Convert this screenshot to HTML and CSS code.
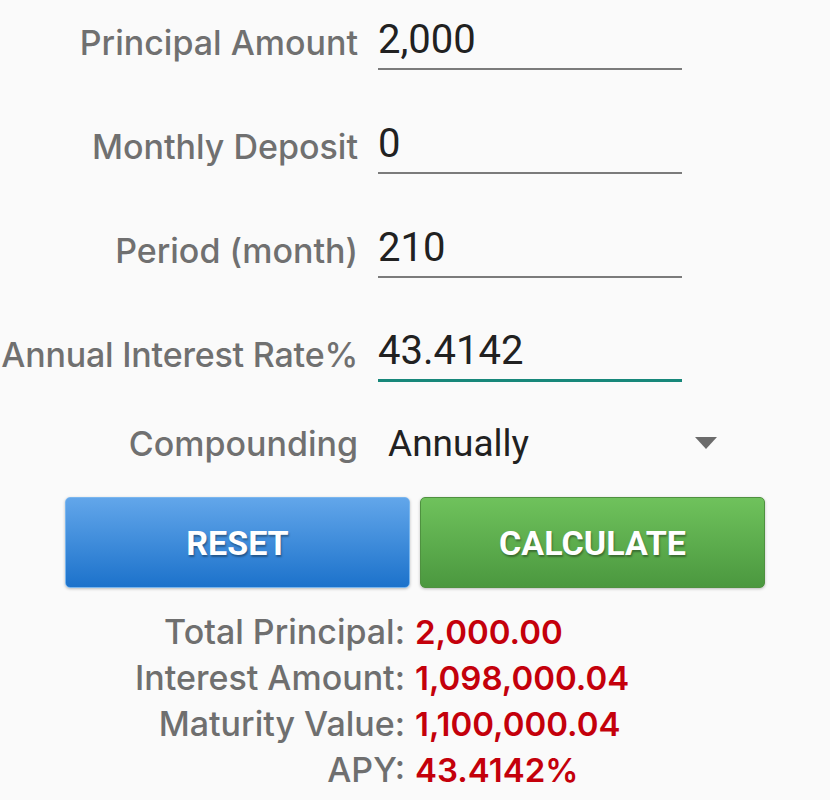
FILE: index.html
```html
<!DOCTYPE html>
<html lang="en">
  <head>
    <meta charset="UTF-8" />
    <meta name="viewport" content="width=device-width, initial-scale=1.0" />
    <title>Compound Interest Calculator</title>
    <link rel="stylesheet" href="styles.css">
  </head>
  <body>
    <div class="calculator">
      <form class="inputs" id="calcForm">
        <div class="row">
          <label for="principal">Principal Amount</label>
          <input type="text" class="field" id="principal" value="2,000" />
        </div>
        <div class="row">
          <label for="deposit">Monthly Deposit</label>
          <input type="text" class="field" id="deposit" value="0" />
        </div>
        <div class="row">
          <label for="period">Period (month)</label>
          <input type="text" class="field" id="period" value="210" />
        </div>
        <div class="row">
          <label for="rate" class="longLabel">Annual Interest Rate%</label>
          <input type="text" class="field focused" id="rate" value="43.4142" />
        </div>
        <div class="row spinnerRow">
          <label>Compounding</label>
          <div class="spinner">
            <span>Annually</span>
            <span class="arrow"></span>
          </div>
        </div>
      </form>

      <div class="actions">
        <button class="btn reset" type="button">RESET</button>
        <button class="btn calculate" type="button">CALCULATE</button>
      </div>

      <div class="results">
        <span class="resLabel">Total Principal:</span>
        <span class="resValue">2,000.00</span>
        <span class="resLabel">Interest Amount:</span>
        <span class="resValue">1,098,000.04</span>
        <span class="resLabel">Maturity Value:</span>
        <span class="resValue">1,100,000.04</span>
        <span class="resLabel">APY:</span>
        <span class="resValue">43.4142%</span>
      </div>
    </div>
  </body>
</html>
```

FILE: styles.css
```css
body {
  margin: 0;
  padding: 0;
  background-color: #fafafa;
  font-family: Inter, "Noto Sans", sans-serif;
}

.calculator {
  width: 830px;
}

.inputs {
  padding-top: 14px;
  margin: 0;
}

.row {
  display: grid;
  grid-template-columns: 358px 304px;
  column-gap: 20px;
  align-items: center;
  height: 56px;
  margin-bottom: 48px;
}

.row label {
  justify-self: end;
  white-space: nowrap;
  font-size: 34px;
  font-weight: 500;
  color: #707070;
}

.row .longLabel {
  letter-spacing: -0.2px;
}

.field {
  box-sizing: border-box;
  width: 304px;
  height: 56px;
  margin: 0;
  padding: 0 0 4px 0;
  border: none;
  border-bottom: 2px solid #7b7b7b;
  background: transparent;
  font-family: Roboto, sans-serif;
  font-size: 40px;
  color: #212121;
  outline: none;
}

.field.focused {
  border-bottom: 3px solid #17877a;
}

.spinnerRow {
  margin-top: -15px;
  margin-bottom: 0;
  grid-template-columns: 358px 352px;
}

.spinner {
  display: flex;
  align-items: center;
  justify-content: space-between;
  padding-left: 10px;
  padding-right: 13px;
  font-family: Roboto, sans-serif;
  font-size: 37px;
  color: #212121;
}

.arrow {
  width: 0;
  height: 0;
  border-left: 11px solid transparent;
  border-right: 11px solid transparent;
  border-top: 12px solid #6b6b6b;
}

.actions {
  display: flex;
  justify-content: center;
  gap: 10px;
  margin-top: 26px;
}

.btn {
  width: 345px;
  height: 91px;
  border-radius: 5px;
  font-family: Roboto, sans-serif;
  font-size: 34px;
  font-weight: bold;
  color: white;
  text-shadow: 1px 2px 2px rgba(0, 0, 0, 0.35);
  box-shadow: 0 1px 3px rgba(0, 0, 0, 0.25);
  cursor: pointer;
}

.reset {
  background: linear-gradient(#62a6ea, #1c72cb);
  border: 1px solid #7ab6ee;
}

.calculate {
  background: linear-gradient(#6fc25c, #4b983f);
  border: 1px solid #4f9140;
}

.results {
  display: grid;
  grid-template-columns: 405px auto;
  column-gap: 10px;
  margin-top: 21px;
  line-height: 46px;
}

.resLabel {
  text-align: right;
  font-size: 34px;
  color: #6f6f6f;
  font-weight: 500;
}

.resValue {
  font-size: 33px;
  color: #c4000b;
  font-weight: 600;
}
```
